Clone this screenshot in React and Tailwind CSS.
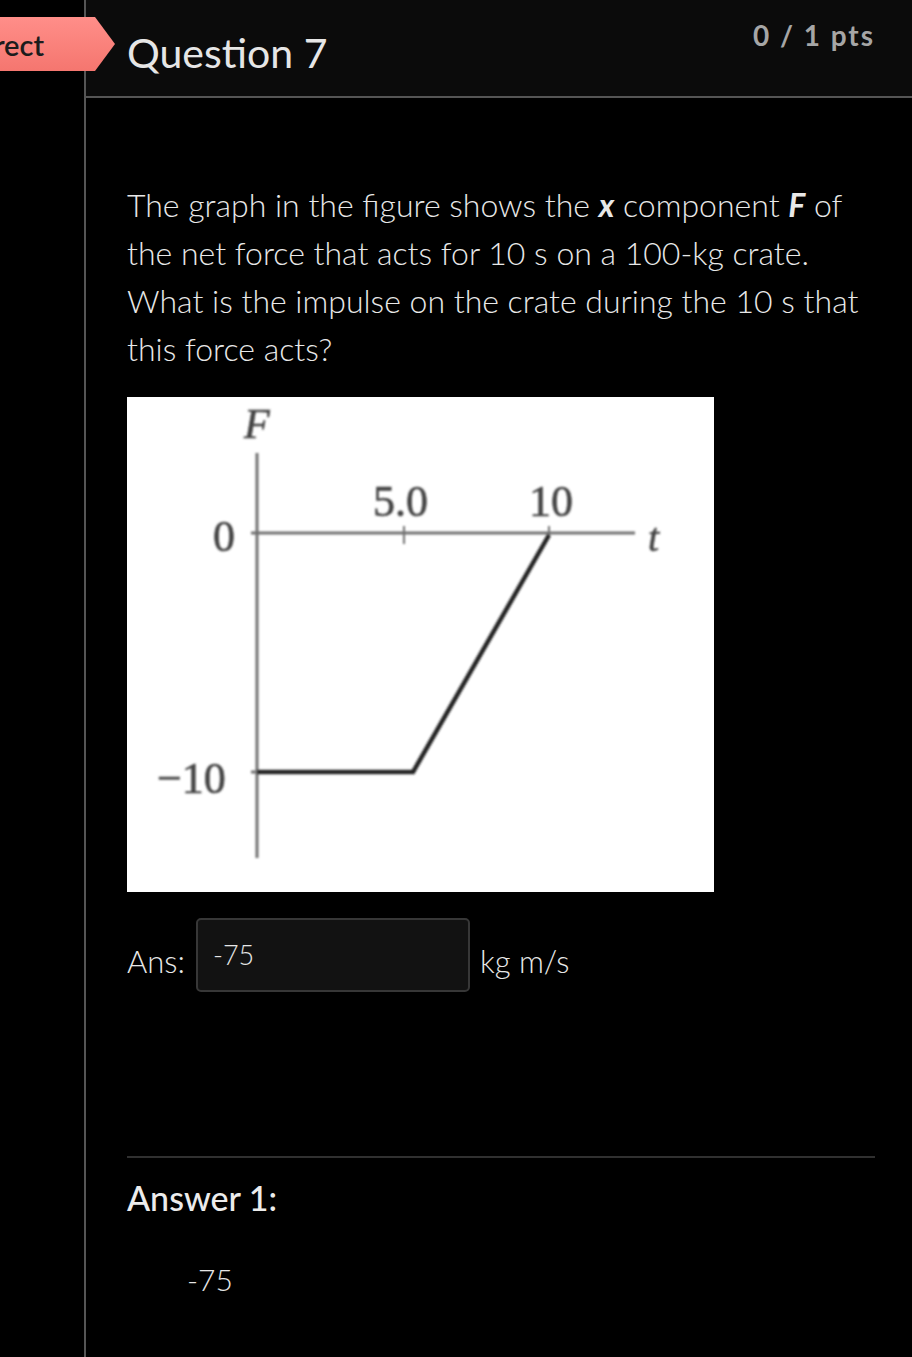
import React from "react";

function Graph() {
  return (
    <svg width="587" height="495" viewBox="0 0 587 495" className="block">
      <defs>
        <filter id="soft" x="-5%" y="-5%" width="110%" height="110%">
          <feGaussianBlur stdDeviation="0.8" />
        </filter>
      </defs>
      <rect x="0" y="0" width="587" height="495" fill="#ffffff" />
      <g filter="url(#soft)">
        <line x1="130" y1="56" x2="130" y2="461" stroke="#707070" strokeWidth="3" />
        <line x1="124" y1="136" x2="508" y2="136" stroke="#707070" strokeWidth="3" />
        <line x1="277" y1="129" x2="277" y2="147" stroke="#707070" strokeWidth="2" />
        <line x1="422" y1="129" x2="422" y2="140" stroke="#707070" strokeWidth="2" />
        <line x1="124" y1="375" x2="130" y2="375" stroke="#707070" strokeWidth="3" />
        <polyline points="130,375 286,375 422,138" fill="none" stroke="#222222" strokeWidth="4.5" strokeLinejoin="miter" />
        <g fontFamily="'Liberation Serif', 'DejaVu Serif', serif" fill="#444444" stroke="#444444" strokeWidth="0.6">
          <text x="117" y="41" fontSize="42" fontStyle="italic">F</text>
          <text x="246" y="119" fontSize="44">5.0</text>
          <text x="402" y="119" fontSize="44">10</text>
          <text x="86" y="154" fontSize="44">0</text>
          <text x="521" y="154" fontSize="40" fontStyle="italic">t</text>
          <text x="30" y="396" fontSize="44">−10</text>
        </g>
      </g>
    </svg>
  );
}

export default function App() {
  return (
    <div
      className="relative flex min-h-[1357px] w-[912px] bg-black text-[#e8e8e8] overflow-hidden"
      style={{ fontFamily: "Lato, 'Noto Sans', sans-serif" }}
    >
      {/* Incorrect badge */}
      <div className="absolute left-0 top-[17px] z-10 flex h-[54px] w-[115px] items-center justify-end overflow-hidden bg-gradient-to-b from-[#ff8e89] to-[#f5766f] pr-[71px] [clip-path:polygon(0_0,95px_0,115px_27px,95px_54px,0_54px)]">
        <span className="whitespace-nowrap text-[29px] font-semibold leading-none text-[#1c1c1c]">Incorrect</span>
      </div>

      <div className="w-[84px] shrink-0" />

      <div className="flex min-h-[1357px] flex-1 flex-col border-l-2 border-[#555555]">
        {/* Header */}
        <div className="flex h-[98px] shrink-0 items-start justify-between border-b-2 border-[#555555] bg-[#0b0b0b] pl-[41px] pr-[37px]">
          <div className="pt-[28px] text-[41px] font-normal leading-[1.2] text-[#e6e6e6]">Question 7</div>
          <div className="pt-[19px] text-[28px] font-bold leading-[1.2] tracking-[0.07em] text-[#a6a6a6]">0 / 1 pts</div>
        </div>

        {/* Body */}
        <div className="flex flex-col pl-[41px] pr-[37px]">
          <p className="mt-[83px] text-[32px] font-light leading-[48px] text-[#e8e8e8]">
            The graph in the figure shows the <b className="font-bold italic">x</b> component{" "}
            <b className="font-bold italic">F</b> of the net force that acts for 10 s on a 100-kg crate. What is the impulse on the crate during the 10 s that this force acts?
          </p>

          <div className="mt-[24px] w-[587px]">
            <Graph />
          </div>

          <div className="mt-[26px] flex items-start">
            <span className="mt-[19px] text-[31px] font-light leading-[48px]">Ans:</span>
            <div className="ml-[11px] flex h-[74px] w-[274px] items-center rounded-[5px] border-2 border-[#373737] bg-[#121212] pl-[15px]">
              <span className="text-[27px] font-light text-[#e6e6e6]">-75</span>
            </div>
            <span className="ml-[10px] mt-[19px] text-[31px] font-light leading-[48px]">kg m/s</span>
          </div>

          <div className="mt-[164px] h-[2px] w-full bg-[#303030]" />

          <div className="mt-[16px] text-[34px] font-medium leading-[48px] text-[#ececec]">Answer 1:</div>
          <div className="mt-[33px] pl-[60px] text-[30px] font-light leading-[48px] text-[#e6e6e6]">-75</div>
        </div>
      </div>
    </div>
  );
}
